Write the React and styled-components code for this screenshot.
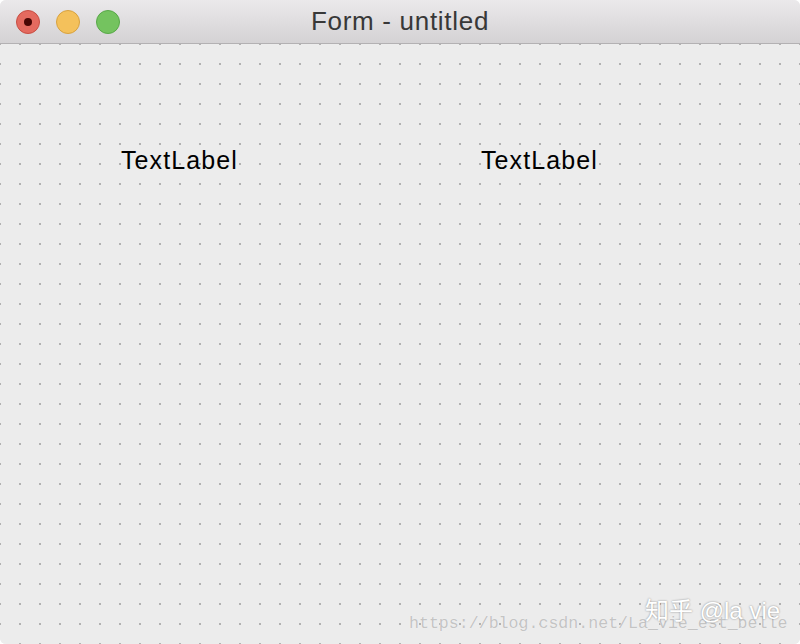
import styled, { createGlobalStyle } from 'styled-components'

const GlobalStyle = createGlobalStyle`
    html, body {
        margin: 0;
        padding: 0;
        background: #ffffff;
    }
`

const Window = styled.div`
    width: 800px;
    height: 644px;
    display: flex;
    flex-direction: column;
    border-radius: 6px;
    overflow: hidden;
    position: relative;
    font-family: 'Liberation Sans', Arial, sans-serif;
    background: #ececec;
`

const TitleBar = styled.div`
    height: 43px;
    flex-shrink: 0;
    display: flex;
    align-items: center;
    padding-left: 16px;
    gap: 16px;
    position: relative;
    background: linear-gradient(#ebe9eb, #d4d2d4);
    border-bottom: 1px solid #b3b1b3;
`

const colors = {
    close: ['#e46a5f', '#c84e43'],
    min: ['#f4c15b', '#d8a23f'],
    max: ['#74c35f', '#58a848'],
}

const Light = styled.span`
    width: 22px;
    height: 22px;
    border-radius: 50%;
    background: ${p => colors[p.kind][0]};
    border: 1px solid ${p => colors[p.kind][1]};
    display: flex;
    align-items: center;
    justify-content: center;
`

const Dot = styled.span`
    width: 8px;
    height: 8px;
    border-radius: 50%;
    background: #4a0704;
`

const Title = styled.div`
    position: absolute;
    left: 0;
    right: 0;
    top: 0;
    bottom: 0;
    display: flex;
    align-items: center;
    justify-content: center;
    font-size: 26px;
    letter-spacing: 0.7px;
    color: #383838;
    pointer-events: none;
`

const Canvas = styled.div`
    flex: 1;
    background-color: #ececec;
    background-image: radial-gradient(circle, #b0b0b0 0.7px, transparent 1.2px);
    background-size: 20px 20px;
    background-position: -10px -10px;
    padding: 101px 0 0 121px;
`

const LabelRow = styled.div`
    display: flex;
    gap: 244px;
`

const Label = styled.div`
    width: 116px;
    font-size: 25px;
    line-height: 30px;
    letter-spacing: 1.1px;
    color: #000;
    white-space: nowrap;
`

const Mark = styled.div`
    position: absolute;
    left: 645px;
    top: 591px;
    font-family: 'Liberation Sans', 'Noto Sans CJK SC', sans-serif;
    font-size: 24px;
    color: #ffffff;
    text-shadow: 0 0 2px rgba(0, 0, 0, 0.45);
`

const Url = styled.div`
    position: absolute;
    left: 409px;
    top: 614px;
    font-family: 'Liberation Mono', monospace;
    font-size: 16.6px;
    color: #c4c4c4;
    text-shadow: 0 0 1px #ffffff;
`

export default function App() {
    return (
        <>
            <GlobalStyle />
            <Window>
                <TitleBar>
                    <Light kind="close"><Dot /></Light>
                    <Light kind="min" />
                    <Light kind="max" />
                    <Title>Form - untitled</Title>
                </TitleBar>
                <Canvas>
                    <LabelRow>
                        <Label>TextLabel</Label>
                        <Label>TextLabel</Label>
                    </LabelRow>
                </Canvas>
                <Url>https://blog.csdn.net/La_vie_est_belle</Url>
                <Mark>知乎 @la vie</Mark>
            </Window>
        </>
    )
}
